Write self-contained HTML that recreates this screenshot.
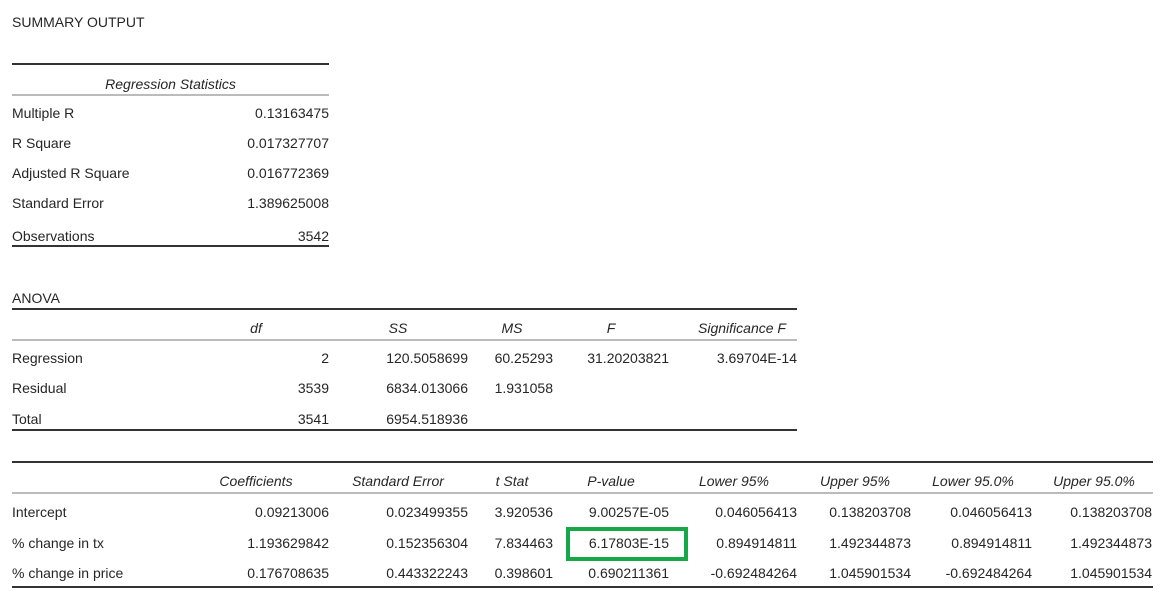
<!DOCTYPE html>
<html><head><meta charset="utf-8"><style>
body{margin:0;width:1172px;height:600px;background:#fff;position:relative;overflow:hidden;font-family:"Liberation Sans",sans-serif;font-size:14px;color:#262626}
div{position:absolute;white-space:nowrap;line-height:16px}
.l{text-align:left}
.r{text-align:right}
.c{text-align:center;font-style:italic}
.hl{height:2px;background:#333}
.ll{height:2px;background:#bbb}
</style></head><body>
<div style="left:12px;top:14px">SUMMARY OUTPUT</div>

<div class="hl" style="left:12px;width:317px;top:63px"></div>
<div class="c" style="left:12px;width:317px;top:76px">Regression Statistics</div>
<div class="ll" style="left:12px;width:317px;top:94px"></div>
<div style="left:12px;top:105px">Multiple R</div><div class="r" style="right:843px;top:105px">0.13163475</div>
<div style="left:12px;top:135px">R Square</div><div class="r" style="right:843px;top:135px">0.017327707</div>
<div style="left:12px;top:165px">Adjusted R Square</div><div class="r" style="right:843px;top:165px">0.016772369</div>
<div style="left:12px;top:195px">Standard Error</div><div class="r" style="right:843px;top:195px">1.389625008</div>
<div style="left:12px;top:228px">Observations</div><div class="r" style="right:843px;top:228px">3542</div>
<div class="hl" style="left:12px;width:317px;top:245px"></div>

<div style="left:12px;top:290px">ANOVA</div>
<div class="hl" style="left:12px;width:785px;top:308px"></div>
<div class="c" style="left:236px;width:40px;top:320px">df</div>
<div class="c" style="left:378px;width:40px;top:320px">SS</div>
<div class="c" style="left:492px;width:40px;top:320px">MS</div>
<div class="c" style="left:591px;width:40px;top:320px">F</div>
<div class="c" style="left:682px;width:120px;top:320px">Significance F</div>
<div class="ll" style="left:12px;width:785px;top:339px"></div>
<div style="left:12px;top:350px">Regression</div>
<div class="r" style="right:843px;top:350px">2</div>
<div class="r" style="right:704px;top:350px">120.5058699</div>
<div class="r" style="right:619px;top:350px">60.25293</div>
<div class="r" style="right:503px;top:350px">31.20203821</div>
<div class="r" style="right:375px;top:350px">3.69704E-14</div>
<div style="left:12px;top:380px">Residual</div>
<div class="r" style="right:843px;top:380px">3539</div>
<div class="r" style="right:704px;top:380px">6834.013066</div>
<div class="r" style="right:619px;top:380px">1.931058</div>
<div style="left:12px;top:411px">Total</div>
<div class="r" style="right:843px;top:411px">3541</div>
<div class="r" style="right:704px;top:411px">6954.518936</div>
<div class="hl" style="left:12px;width:785px;top:429px"></div>

<div class="hl" style="left:12px;width:1141px;top:461px"></div>
<div class="c" style="left:196px;width:120px;top:473px">Coefficients</div>
<div class="c" style="left:338px;width:120px;top:473px">Standard Error</div>
<div class="c" style="left:472px;width:80px;top:473px">t Stat</div>
<div class="c" style="left:571px;width:80px;top:473px">P-value</div>
<div class="c" style="left:684px;width:100px;top:473px">Lower 95%</div>
<div class="c" style="left:805px;width:100px;top:473px">Upper 95%</div>
<div class="c" style="left:918px;width:110px;top:473px">Lower 95.0%</div>
<div class="c" style="left:1039px;width:110px;top:473px">Upper 95.0%</div>
<div class="ll" style="left:12px;width:1141px;top:492px"></div>

<div style="left:12px;top:504px">Intercept</div>
<div class="r" style="right:843px;top:504px">0.09213006</div>
<div class="r" style="right:704px;top:504px">0.023499355</div>
<div class="r" style="right:619px;top:504px">3.920536</div>
<div class="r" style="right:503px;top:504px">9.00257E-05</div>
<div class="r" style="right:375px;top:504px">0.046056413</div>
<div class="r" style="right:261px;top:504px">0.138203708</div>
<div class="r" style="right:140px;top:504px">0.046056413</div>
<div class="r" style="right:20px;top:504px">0.138203708</div>

<div style="left:566px;top:527px;width:114px;height:26px;border:4px solid #16a848"></div>
<div style="left:12px;top:535px">% change in tx</div>
<div class="r" style="right:843px;top:535px">1.193629842</div>
<div class="r" style="right:704px;top:535px">0.152356304</div>
<div class="r" style="right:619px;top:535px">7.834463</div>
<div class="r" style="right:503px;top:535px">6.17803E-15</div>
<div class="r" style="right:375px;top:535px">0.894914811</div>
<div class="r" style="right:261px;top:535px">1.492344873</div>
<div class="r" style="right:140px;top:535px">0.894914811</div>
<div class="r" style="right:20px;top:535px">1.492344873</div>

<div style="left:12px;top:565px">% change in price</div>
<div class="r" style="right:843px;top:565px">0.176708635</div>
<div class="r" style="right:704px;top:565px">0.443322243</div>
<div class="r" style="right:619px;top:565px">0.398601</div>
<div class="r" style="right:503px;top:565px">0.690211361</div>
<div class="r" style="right:375px;top:565px">-0.692484264</div>
<div class="r" style="right:261px;top:565px">1.045901534</div>
<div class="r" style="right:140px;top:565px">-0.692484264</div>
<div class="r" style="right:20px;top:565px">1.045901534</div>
<div class="hl" style="left:12px;width:1141px;top:586px"></div>
</body></html>
